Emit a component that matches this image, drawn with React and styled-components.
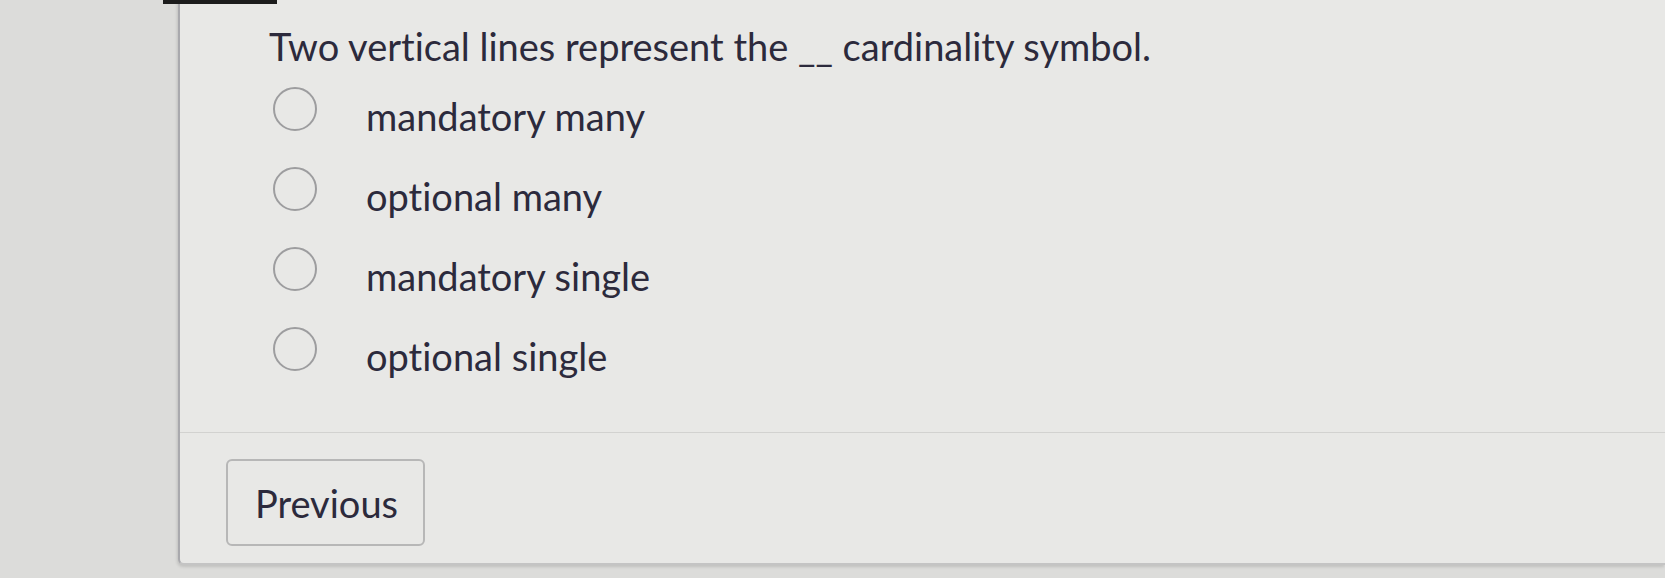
import React from "react";
import styled, { createGlobalStyle } from "styled-components";

const GlobalStyle = createGlobalStyle`
    html, body {
        margin: 0;
        padding: 0;
        background: #dcdcda;
        font-family: Lato, "Open Sans", sans-serif;
        font-variant-ligatures: none;
        color: #2c2a3c;
    }
`;

const Page = styled.div`
    position: relative;
    width: 1665px;
    height: 578px;
    overflow: hidden;
    background: #dcdcda;
`;

/* dark tab peeking in at the top edge */
const TopTab = styled.div`
    position: absolute;
    top: 0;
    left: 163px;
    width: 114px;
    height: 4px;
    background: #1c1c1c;
    z-index: 2;
`;

const Panel = styled.div`
    margin-left: 178px;
    height: 563px;
    background: #e8e8e6;
    border-left: 2px solid #a9a9ad;
    border-bottom: 2px solid #c4c4c4;
    border-bottom-left-radius: 6px;
    box-shadow: -1px 2px 3px rgba(0, 0, 0, 0.12);
    display: flex;
    flex-direction: column;
`;

const QuestionBlock = styled.div`
    padding: 23px 0 0 89px;
`;

const Question = styled.div`
    font-size: 38px;
    line-height: 46px;
    margin-bottom: 24px;
`;

const OptionList = styled.div`
    display: flex;
    flex-direction: column;
    gap: 34px;
`;

const Option = styled.label`
    display: flex;
    align-items: center;
    gap: 49px;
    font-size: 38px;
    line-height: 46px;
`;

const Radio = styled.span`
    width: 40px;
    height: 40px;
    border: 2px solid #9d9d9f;
    border-radius: 50%;
    margin-left: 4px;
    margin-top: -14px;
    flex-shrink: 0;
`;

const Divider = styled.div`
    margin-top: 53px;
    border-top: 1px solid #d2d2d0;
`;

const Footer = styled.div`
    padding: 26px 0 0 46px;
`;

const Button = styled.button`
    width: 199px;
    height: 87px;
    background: #e8e8e6;
    border: 2px solid #b7b7b7;
    border-radius: 6px;
    font-family: Lato, "Open Sans", sans-serif;
    font-size: 38px;
    color: #2c2a3c;
    padding: 0 0 0 2px;
    cursor: pointer;
`;

const options = ["mandatory many", "optional many", "mandatory single", "optional single"];

function App() {
    return (
        <Page>
            <GlobalStyle />
            <TopTab />
            <Panel>
                <QuestionBlock>
                    <Question>Two vertical lines represent the __ cardinality symbol.</Question>
                    <OptionList>
                        {options.map((opt) => (
                            <Option key={opt}>
                                <Radio />
                                {opt}
                            </Option>
                        ))}
                    </OptionList>
                </QuestionBlock>
                <Divider />
                <Footer>
                    <Button>Previous</Button>
                </Footer>
            </Panel>
        </Page>
    );
}

export default App;
